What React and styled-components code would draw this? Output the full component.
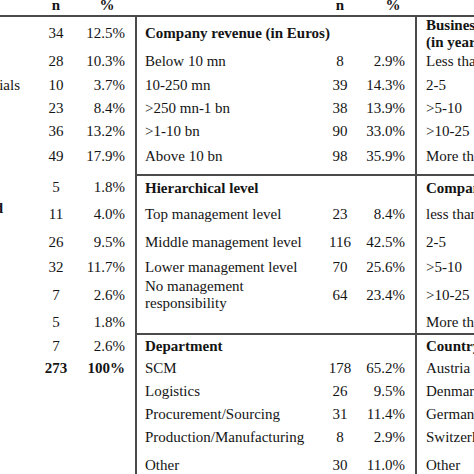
import React from "react";
import styled, { createGlobalStyle } from "styled-components";

const GlobalStyle = createGlobalStyle`
  html, body {
    margin: 0;
    padding: 0;
    background: #ffffff;
    overflow: hidden;
  }
  body {
    font-family: "Liberation Serif", "Times New Roman", serif;
    color: #141414;
  }
`;

const rows = [
  { h: 33, ln: "34", lp: "12.5%", mid: "Company revenue (in Euros)", midBold: true, right: ["Business experience", "(in years)"], rightBold: true },
  { h: 24, ln: "28", lp: "10.3%", mid: "Below 10 mn", mn: "8", mp: "2.9%", right: ["Less than 2"] },
  { h: 24, left: "Raw materials", leftEnd: 10, ln: "10", lp: "3.7%", mid: "10-250 mn", mn: "39", mp: "14.3%", right: ["2-5"] },
  { h: 22, ln: "23", lp: "8.4%", mid: ">250 mn-1 bn", mn: "38", mp: "13.9%", right: [">5-10"] },
  { h: 23, ln: "36", lp: "13.2%", mid: ">1-10 bn", mn: "90", mp: "33.0%", right: [">10-25"] },
  { h: 33, lift: 5, ln: "49", lp: "17.9%", mid: "Above 10 bn", mn: "98", mp: "35.9%", right: ["More than 25"] },

  { h: 24, section: true, ln: "5", lp: "1.8%", mid: "Hierarchical level", midBold: true, right: ["Company affiliation"], rightBold: true },
  { h: 30, left: "Industry field", leftEnd: 27, leftBold: true, ln: "11", lp: "4.0%", mid: "Top management level", mn: "23", mp: "8.4%", right: ["less than 2"] },
  { h: 26, ln: "26", lp: "9.5%", mid: "Middle management level", mn: "116", mp: "42.5%", right: ["2-5"] },
  { h: 24, ln: "32", lp: "11.7%", mid: "Lower management level", mn: "70", mp: "25.6%", right: [">5-10"] },
  { h: 30, ln: "7", lp: "2.6%", mid: ["No management", "responsibility"], mn: "64", mp: "23.4%", right: [">10-25"] },
  { h: 24, ln: "5", lp: "1.8%", mid: "", right: ["More than 25"] },

  { h: 23, section: true, ln: "7", lp: "2.6%", mid: "Department", midBold: true, right: ["Country"], rightBold: true },
  { h: 22, ln: "273", lp: "100%", leftNumBold: true, mid: "SCM", mn: "178", mp: "65.2%", right: ["Austria"] },
  { h: 23, mid: "Logistics", mn: "26", mp: "9.5%", right: ["Denmark"] },
  { h: 23, mid: "Procurement/Sourcing", mn: "31", mp: "11.4%", right: ["Germany"] },
  { h: 23, mid: "Production/Manufacturing", mn: "8", mp: "2.9%", right: ["Switzerland"] },
  { h: 34, mid: "Other", mn: "30", mp: "11.0%", right: ["Other"] },
];

function Lines({ text }) {
  if (!Array.isArray(text)) return text || null;
  if (text.length === 1) return text[0];
  return (
    <Stack>
      {text.map((t, i) => (
        <React.Fragment key={i}>
          {i > 0 && <br />}
          {t}
        </React.Fragment>
      ))}
    </Stack>
  );
}

export default function App() {
  return (
    <>
      <GlobalStyle />
      <Page>
        <Table>
          <colgroup>
            <col style={{ width: 150 }} />
            <col style={{ width: 52 }} />
            <col style={{ width: 54 }} />
            <col style={{ width: 180 }} />
            <col style={{ width: 48 }} />
            <col style={{ width: 52 }} />
            <col style={{ width: 220 }} />
          </colgroup>
          <thead>
            <HeadRow>
              <HeadCell />
              <HeadCell>n</HeadCell>
              <HeadCell $padR={4}>%</HeadCell>
              <HeadCell />
              <HeadCell>n</HeadCell>
              <HeadCell $padL={6}>%</HeadCell>
              <HeadCell />
            </HeadRow>
          </thead>
          <tbody>
            {rows.map((r, i) => (
              <Row key={i} $h={r.h} $lift={r.lift}>
                <LeftLabel $end={r.leftEnd} $bold={r.leftBold}>
                  {r.left}
                </LeftLabel>
                <NumCell $bold={r.leftNumBold}>{r.ln}</NumCell>
                <PctCell $bold={r.leftNumBold}>{r.lp}</PctCell>
                <LabelCell $bold={r.midBold} $section={r.section}>
                  <Lines text={r.mid} />
                </LabelCell>
                <NumCell $section={r.section}>{r.mn}</NumCell>
                <PctCell $section={r.section}>{r.mp}</PctCell>
                <LabelCell $bold={r.rightBold} $section={r.section} $right>
                  <Lines text={r.right} />
                </LabelCell>
              </Row>
            ))}
          </tbody>
        </Table>
      </Page>
    </>
  );
}

const Page = styled.div`
  width: 474px;
  height: 474px;
  overflow: hidden;
`;

const Table = styled.table`
  border-collapse: collapse;
  table-layout: fixed;
  width: 756px;
  margin-left: -120px;
  margin-top: -8px;
  font-size: 15px;
  line-height: 17px;
`;

const HeadRow = styled.tr`
  height: 24px;
`;

const HeadCell = styled.th`
  padding: 4px ${(p) => p.$padR || 0}px 0 ${(p) => p.$padL || 0}px;
  border-bottom: 2px solid #4a4a4a;
  font-weight: bold;
  text-align: center;
  vertical-align: middle;
`;

const Row = styled.tr`
  height: ${(p) => p.$h}px;

  & > td {
    padding-bottom: ${(p) => p.$lift || 0}px;
  }
`;

const Stack = styled.div`
  margin: -2px 0;
`;

const LeftLabel = styled.td`
  padding-right: ${(p) => p.$end || 10}px;
  text-align: right;
  white-space: nowrap;
  overflow: hidden;
  vertical-align: ${(p) => (p.$bold ? "top" : "middle")};
  font-weight: ${(p) => (p.$bold ? "bold" : "normal")};
`;

const NumCell = styled.td`
  padding-left: 0;
  padding-right: 0;
  text-align: center;
  vertical-align: middle;
  white-space: nowrap;
  font-weight: ${(p) => (p.$bold ? "bold" : "normal")};
  border-top: ${(p) => (p.$section ? "2px solid #4a4a4a" : "none")};
`;

const PctCell = styled.td`
  padding-left: 0;
  padding-right: 10px;
  text-align: right;
  vertical-align: middle;
  white-space: nowrap;
  font-weight: ${(p) => (p.$bold ? "bold" : "normal")};
  border-top: ${(p) => (p.$section ? "2px solid #4a4a4a" : "none")};
`;

const LabelCell = styled.td`
  padding-left: ${(p) => (p.$right ? "9px" : "8px")};
  padding-right: 0;
  border-left: 2px solid #4a4a4a;
  border-top: ${(p) => (p.$section ? "2px solid #4a4a4a" : "none")};
  text-align: left;
  vertical-align: middle;
  white-space: nowrap;
  font-weight: ${(p) => (p.$bold ? "bold" : "normal")};
`;
